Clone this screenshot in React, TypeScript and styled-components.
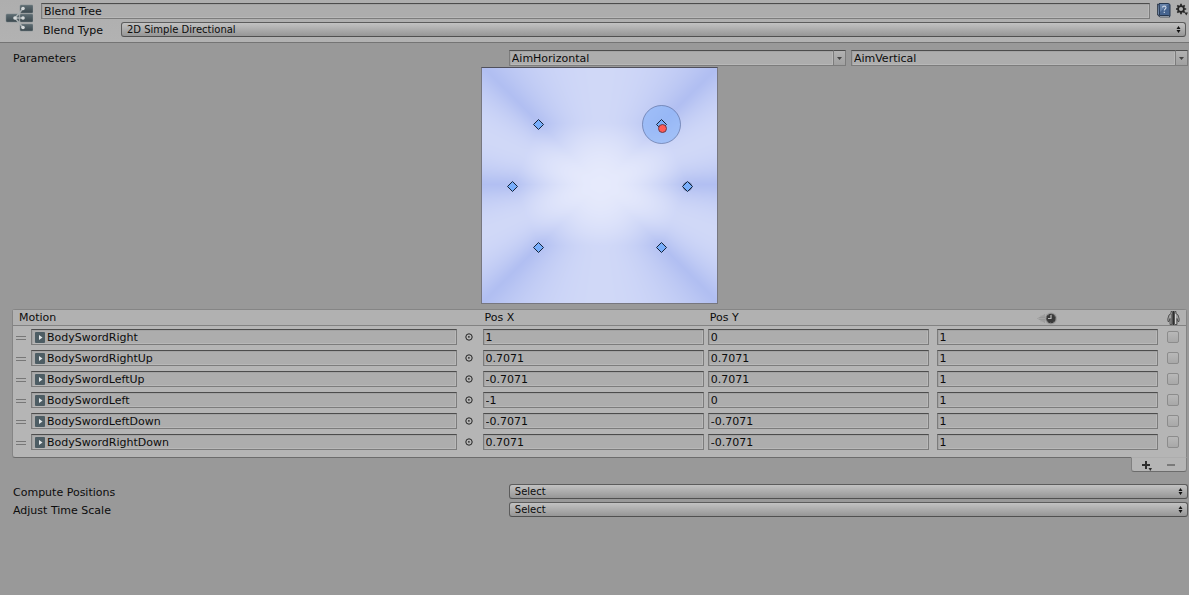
import React, { useEffect, useRef } from "react";
import styled, { createGlobalStyle } from "styled-components";

const GlobalStyle = createGlobalStyle`
  *, *::before, *::after { box-sizing: border-box; }
  body {
    margin: 0;
    min-height: 100vh;
    background: #999;
    color: #0c0c0c;
    font: 11px/15px "DejaVu Sans", Verdana, sans-serif;
  }
  button, input, select { font: inherit; color: inherit; margin: 0; }
`;

/* ---------- shared controls ---------- */

const TextField = styled.input<{ $inset?: number }>`
  display: block;
  flex: 1;
  min-width: 0;
  width: 100%;
  height: 16px;
  padding: 0 0 0 ${(p) => p.$inset ?? 2}px;
  border: 1px solid #7c7c7c;
  border-top-color: #4c4c4c;
  border-radius: 0;
  background: #adadad;
  box-shadow: inset 1px 1px 0 #a3a3a3, inset -1px -1px 0 #b8b8b8;
  outline: none;
`;

const IconButton = styled.button<{ $w: number; $h: number }>`
  display: flex;
  flex: none;
  align-items: center;
  justify-content: center;
  width: ${(p) => p.$w}px;
  height: ${(p) => p.$h}px;
  padding: 0;
  border: 0;
  background: none;
`;

const PopupFrame = styled.div`
  position: relative;
  display: flex;
  flex: 1;
  min-width: 0;
`;

const PopupSelect = styled.select`
  appearance: none;
  width: 100%;
  height: 15px;
  padding: 0 16px 0 5px;
  border: 1px solid #5c5c5c;
  border-bottom-color: #505050;
  border-radius: 3px;
  background: linear-gradient(#c2c2c2, #969696);
  font-size: 10px;
  line-height: 13px;
  outline: none;
`;

const PopupArrows = styled.svg`
  position: absolute;
  top: 4px;
  right: 5px;
  pointer-events: none;
`;

function Popup({ id, label, value }: { id: string; label?: string; value: string }) {
  return (
    <PopupFrame>
      <PopupSelect id={id} aria-label={label} defaultValue={value}>
        <option>{value}</option>
      </PopupSelect>
      <PopupArrows width="5" height="7" viewBox="0 0 5 7" aria-hidden="true">
        <path d="M2.5 0 4.5 3H.5zM2.5 7 4.5 4H.5z" fill="#111" />
      </PopupArrows>
    </PopupFrame>
  );
}

/* ---------- header ---------- */

const Header = styled.header`
  display: flex;
  gap: 8px;
  height: 43px;
  padding: 3px 0 0 5px;
  border-bottom: 1px solid #747474;
  background: linear-gradient(#aeaeae, #b2b2b2);
`;

const HeaderBody = styled.div`
  display: flex;
  flex: 1;
  flex-direction: column;
  gap: 3px;
`;

const TitleRow = styled.div`
  display: flex;
  padding-right: 1px;
`;

const TitleTools = styled.div`
  display: flex;
  gap: 5px;
  padding-left: 7px;
`;

const TypeRow = styled.div`
  display: flex;
  height: 17px;
  padding: 0 3px 0 2px;
`;

const FieldLabel = styled.label`
  line-height: 17px;
`;

const TypeLabel = styled(FieldLabel)`
  width: 78px;
`;

function BlendTreeIcon() {
  return (
    <svg width="28" height="30" viewBox="0 0 28 30" aria-hidden="true">
      <defs>
        <linearGradient id="node" x1="0" y1="0" x2="0" y2="1">
          <stop offset="0" stopColor="#5f6e74" />
          <stop offset="1" stopColor="#3b484e" />
        </linearGradient>
      </defs>
      <g fill="url(#node)" stroke="#7d898d" strokeWidth=".5">
        <rect x="15" y="2" width="13" height="8" rx="1" />
        <rect x="1" y="11" width="13" height="8" rx="1" />
        <rect x="15" y="11" width="13" height="8" rx="1" />
        <rect x="15" y="21" width="13" height="7" rx="1" />
      </g>
      <path d="M10 15 18 5.500M10 15H18M10 15 18 24.500" fill="none" stroke="#a9afb1" strokeWidth="1.500" />
      <g fill="#d6dadb">
        <circle cx="10" cy="15" r="1.800" />
        <circle cx="18" cy="5.500" r="1.800" />
        <circle cx="18" cy="15" r="1.800" />
        <circle cx="18" cy="24.500" r="1.800" />
      </g>
    </svg>
  );
}

function HelpIcon() {
  return (
    <svg width="14" height="15" viewBox="0 0 14 15" aria-hidden="true">
      <path d="M.5 1 3 2.500V14L.5 12z" fill="#7d93b2" stroke="#27313f" strokeWidth=".8" />
      <path d="M1 12 11 12 13 14H3z" fill="#c4cad3" stroke="#27313f" strokeWidth=".7" />
      <path d="M2 .500H11.500L13 1.500V13.300L11.500 12.500H2.500z" fill="#46648f" stroke="#26374f" />
      <path d="M3 1H11.500L3 9z" fill="#7c96ba" opacity=".6" />
      <path d="M5.500 4.500C5.500 2.600 9 2.600 9 4.600 9 6 7.300 6 7.300 7.500M7.300 8.800V10" fill="none" stroke="#c9d4e4" strokeWidth="1.200" />
    </svg>
  );
}

function GearIcon() {
  return (
    <svg width="12" height="14" viewBox="0 0 12 14" aria-hidden="true">
      <circle cx="5" cy="6" r="2.900" fill="none" stroke="#262626" strokeWidth="1.700" />
      <path
        d="M5 .8V3M5 9V11.200M-.2 6H2M8 6H10.200M1.300 2.300 2.900 3.900M7.100 8.100 8.700 9.700M1.300 9.700 2.900 8.100M7.100 3.900 8.700 2.300"
        stroke="#262626"
        strokeWidth="1.700"
      />
      <path d="M8.500 9.500H12L10.300 12.500z" fill="#262626" />
    </svg>
  );
}

/* ---------- parameter rows ---------- */

const Main = styled.main`
  padding: 7px 1px 0 13px;
`;

const PropertyRow = styled.div`
  display: grid;
  grid-template-columns: 73fr 100fr;
  height: 16px;
`;

const RowCaption = styled.span`
  line-height: 17px;
`;

const PropertyFields = styled.div`
  display: flex;
  gap: 5px;
`;

const Combo = styled.div`
  display: flex;
  flex: 1;
  min-width: 0;
`;

const ComboButton = styled.button`
  display: flex;
  align-items: center;
  justify-content: center;
  width: 13px;
  height: 16px;
  margin-left: -1px;
  padding: 0;
  border: 1px solid #7c7c7c;
  border-top-color: #4c4c4c;
  background: linear-gradient(#b2b2b2, #a0a0a0);
`;

function ParameterCombo({ label, value }: { label: string; value: string }) {
  return (
    <Combo>
      <TextField aria-label={label} defaultValue={value} />
      <ComboButton aria-label={`Choose ${label}`}>
        <svg width="5" height="3" viewBox="0 0 5 3" aria-hidden="true">
          <path d="M0 0H5L2.500 3z" fill="#444" />
        </svg>
      </ComboButton>
    </Combo>
  );
}

/* ---------- blend field ---------- */

const FIELD = 235;
const CENTER = { x: 118, y: 116 };

const Field = styled.div`
  position: relative;
  width: 237px;
  height: 237px;
  margin: 1px auto 5px;
  border: 1px solid #77777f;
  border-top-color: #50505c;
`;

const FieldRow = styled.div`
  padding-right: 2px;
`;

const FieldCanvas = styled.canvas`
  display: block;
`;

const FieldOverlay = styled.svg`
  position: absolute;
  top: 0;
  left: 0;
`;

/* Motion positions relative to the centre, ordered by angle. */
const MOTION_POINTS = [
  { x: 87, y: 0 },
  { x: 61, y: 61 },
  { x: -61, y: 61 },
  { x: -87, y: 0 },
  { x: -61, y: -61 },
  { x: 61, y: -61 },
];

const MARKERS = [
  { x: 56.5, y: 56.5 },
  { x: 179.5, y: 56.5 },
  { x: 30.5, y: 118.5 },
  { x: 205.5, y: 118.5 },
  { x: 56.5, y: 179.5 },
  { x: 179.5, y: 179.5 },
];

/* Sum of squared motion weights at a position of the simple directional blend. */
function blendStrength(x: number, y: number): number {
  const count = MOTION_POINTS.length;
  for (let i = 0; i < count; i++) {
    const a = MOTION_POINTS[i];
    const b = MOTION_POINTS[(i + 1) % count];
    const det = a.x * b.y - a.y * b.x;
    let wa = (x * b.y - y * b.x) / det;
    let wb = (a.x * y - a.y * x) / det;
    if (wa < -1e-6 || wb < -1e-6) continue;
    const total = wa + wb;
    if (total > 1) {
      wa /= total;
      wb /= total;
    }
    const rest = Math.max(0, 1 - wa - wb) / count;
    return (wa + rest) ** 2 + (wb + rest) ** 2 + (count - 2) * rest * rest;
  }
  return 1 / count;
}

/* Average over a small neighbourhood, so the edges between sectors stay soft. */
function softStrength(x: number, y: number): number {
  let sum = 0;
  for (let dy = -6; dy <= 6; dy += 3) {
    for (let dx = -6; dx <= 6; dx += 3) {
      sum += blendStrength(x + dx, y + dy);
    }
  }
  return 0.5 * (sum / 25) + 0.5 * blendStrength(x, y);
}

function BlendField() {
  const ref = useRef<HTMLCanvasElement>(null);
  useEffect(() => {
    const ctx = ref.current?.getContext("2d");
    if (!ctx) return;
    const image = ctx.createImageData(FIELD, FIELD);
    for (let py = 0; py < FIELD; py++) {
      for (let px = 0; px < FIELD; px++) {
        const s = softStrength(px - CENTER.x, py - CENTER.y);
        const at = (py * FIELD + px) * 4;
        image.data[at] = 241 - 66 * s;
        image.data[at + 1] = 243 - 54 * s;
        image.data[at + 2] = 254 - 13 * s;
        image.data[at + 3] = 255;
      }
    }
    ctx.putImageData(image, 0, 0);
  }, []);
  return (
    <Field>
      <FieldCanvas ref={ref} width={FIELD} height={FIELD} role="img" aria-label="Blend space" />
      <FieldOverlay width={FIELD} height={FIELD} viewBox={`0 0 ${FIELD} ${FIELD}`} aria-hidden="true">
        <circle cx="179.5" cy="56.5" r="19" fill="#86b2f8" fillOpacity=".6" stroke="#4a5c8c" strokeOpacity=".55" />
        <circle cx="205.5" cy="118.5" r="4.500" fill="#7f90b8" stroke="#4a5c8c" strokeOpacity=".4" />
        {MARKERS.map((m) => (
          <path
            key={`${m.x}-${m.y}`}
            d={`M${m.x} ${m.y - 5}l5 5-5 5-5-5z`}
            fill="#78aefb"
            stroke="#13233c"
          />
        ))}
        <circle cx="180.5" cy="60.500" r="4" fill="#ff5a55" stroke="#6b3a48" />
      </FieldOverlay>
    </Field>
  );
}

/* ---------- motion list ---------- */

const ListPanel = styled.section`
  margin: 0 1px 0 -1px;
  padding-bottom: 5px;
  border: 1px solid #858585;
  border-bottom-color: #6c6c6c;
  border-radius: 3px 3px 0 3px;
  background: #b5b5b5;
`;

const MotionTable = styled.table`
  width: 100%;
  table-layout: fixed;
  border-collapse: separate;
  border-spacing: 0;
`;

const HeadCell = styled.th<{ $width?: string; $indent?: number }>`
  width: ${(p) => p.$width ?? "auto"};
  height: 16px;
  padding: 0 0 0 ${(p) => p.$indent ?? 0}px;
  border-bottom: 1px solid #828282;
  background: #b1b1b1;
  font-weight: 400;
  line-height: 15px;
  text-align: left;
  white-space: nowrap;
`;

const HeadIcon = styled.div<{ $align?: string }>`
  display: flex;
  justify-content: ${(p) => p.$align ?? "center"};
  padding-right: ${(p) => (p.$align ? 0 : 9)}px;
`;

const Cell = styled.td<{ $gap?: number }>`
  padding: 3px ${(p) => p.$gap ?? 0}px 2px 0;
`;

const Handle = styled.div`
  width: 10px;
  height: 4px;
  margin: 1px 0 0 3px;
  border: solid #777;
  border-width: 1px 0;
`;

const MotionCell = styled.div`
  position: relative;
  display: flex;
`;

const ClipIcon = styled.svg`
  position: absolute;
  top: 3px;
  left: 4px;
`;

const MirrorBox = styled.input`
  appearance: none;
  display: block;
  width: 12px;
  height: 12px;
  border: 1px solid #8c8c8c;
  border-radius: 2px;
  background: linear-gradient(#b8b8b8, #a8a8a8);
`;

const ListFooter = styled.div`
  position: relative;
  display: flex;
  justify-content: space-between;
  width: 56px;
  height: 15px;
  margin: -1px 1px 0 auto;
  padding: 0 8px 0 7px;
  border: 1px solid #808080;
  border-top-color: #adadad;
  border-bottom-color: #6c6c6c;
  border-radius: 0 0 3px 3px;
  background: #b5b5b5;
`;

const FooterWrap = styled.div`
  padding-bottom: 12px;
`;

const PopupRow = styled(PropertyRow)`
  height: 18px;
`;

const MOTIONS = [
  { name: "BodySwordRight", x: "1", y: "0" },
  { name: "BodySwordRightUp", x: "0.7071", y: "0.7071" },
  { name: "BodySwordLeftUp", x: "-0.7071", y: "0.7071" },
  { name: "BodySwordLeft", x: "-1", y: "0" },
  { name: "BodySwordLeftDown", x: "-0.7071", y: "-0.7071" },
  { name: "BodySwordRightDown", x: "0.7071", y: "-0.7071" },
];

function MotionRow({ name, x, y }: { name: string; x: string; y: string }) {
  return (
    <tr>
      <Cell>
        <Handle />
      </Cell>
      <Cell>
        <MotionCell>
          <TextField $inset={15} aria-label="Motion" defaultValue={name} />
          <ClipIcon width="10" height="11" viewBox="0 0 10 11" aria-hidden="true">
            <rect width="10" height="11" rx="1" fill="#4d5d64" />
            <path d="M4 3 7.500 5.500 4 8z" fill="#e4e8ea" />
          </ClipIcon>
          <IconButton $w={26} $h={16} aria-label={`Pick motion for ${name}`}>
            <svg width="10" height="9" viewBox="0 0 10 9" aria-hidden="true">
              <circle cx="4" cy="4" r="3.200" fill="none" stroke="#222" />
              <rect x="3.500" y="3.500" width="1" height="1" fill="#111" stroke="#333" strokeWidth=".4" />
            </svg>
          </IconButton>
        </MotionCell>
      </Cell>
      <Cell $gap={4}>
        <TextField aria-label="Pos X" defaultValue={x} />
      </Cell>
      <Cell $gap={8}>
        <TextField aria-label="Pos Y" defaultValue={y} />
      </Cell>
      <Cell $gap={9}>
        <TextField aria-label="Time scale" defaultValue="1" />
      </Cell>
      <Cell>
        <MirrorBox type="checkbox" aria-label={`Mirror ${name}`} />
      </Cell>
    </tr>
  );
}

function SpeedIcon() {
  return (
    <svg width="20" height="15" viewBox="0 0 20 15" aria-hidden="true">
      <path d="M8 4V13L0 8.500z" fill="#979797" />
      <path d="M3 6H8M1 8.500H8M3 11H8" stroke="#a6a6a6" />
      <circle cx="14" cy="8.500" r="6" fill="#9a9a9a" />
      <circle cx="14" cy="8.500" r="4.800" fill="#3a3a3a" />
      <circle cx="14" cy="8.500" r="4.500" fill="none" stroke="#808080" strokeDasharray="1 2.500" />
      <path d="M14 5V8.500H11" fill="none" stroke="#bcbcbc" strokeWidth="1.200" />
    </svg>
  );
}

function MirrorIcon() {
  return (
    <svg width="13" height="15" viewBox="0 0 13 15" aria-hidden="true">
      <path
        d="M5.500 1.500 4 1.500 4 3.500 2 5 .800 9 1 11.500 2 11.500 3 8.500 3 14.500H5.500z"
        fill="#a4a4a4"
        stroke="#4a4a4a"
        strokeWidth=".9"
      />
      <path
        d="M7.500 1.500 9 1.500 9 3.500 11 5 12.200 9 12 11.500 11 11.500 10 8.500 10 14.500H7.500z"
        fill="#a4a4a4"
        stroke="#4a4a4a"
        strokeWidth=".9"
      />
      <path d="M6.500 1V15" stroke="#2e2e2e" />
      <path d="M4.500 4V14" stroke="#707070" />
      <path d="M8.500 4V14" stroke="#d2d2d2" />
    </svg>
  );
}

export default function App() {
  return (
    <>
      <GlobalStyle />
      <Header>
        <BlendTreeIcon />
        <HeaderBody>
          <TitleRow>
            <TextField aria-label="Name" defaultValue="Blend Tree" />
            <TitleTools>
              <IconButton $w={14} $h={15} aria-label="Help">
                <HelpIcon />
              </IconButton>
              <IconButton $w={12} $h={14} aria-label="Settings">
                <GearIcon />
              </IconButton>
            </TitleTools>
          </TitleRow>
          <TypeRow>
            <TypeLabel htmlFor="blend-type">Blend Type</TypeLabel>
            <Popup id="blend-type" value="2D Simple Directional" />
          </TypeRow>
        </HeaderBody>
      </Header>
      <Main>
        <PropertyRow>
          <RowCaption>Parameters</RowCaption>
          <PropertyFields>
            <ParameterCombo label="horizontal parameter" value="AimHorizontal" />
            <ParameterCombo label="vertical parameter" value="AimVertical" />
          </PropertyFields>
        </PropertyRow>
        <FieldRow>
          <BlendField />
        </FieldRow>
        <ListPanel>
          <MotionTable>
            <thead>
              <tr>
                <HeadCell $width="18px" $indent={6}>Motion</HeadCell>
                <HeadCell $width="38.500%" aria-label="Motion clip" />
                <HeadCell $width="19.200%" $indent={2}>Pos X</HeadCell>
                <HeadCell $width="19.500%" $indent={2}>Pos Y</HeadCell>
                <HeadCell aria-label="Time scale">
                  <HeadIcon>
                    <SpeedIcon />
                  </HeadIcon>
                </HeadCell>
                <HeadCell $width="19px" aria-label="Mirror">
                  <HeadIcon $align="flex-start">
                    <MirrorIcon />
                  </HeadIcon>
                </HeadCell>
              </tr>
            </thead>
            <tbody>
              {MOTIONS.map((m) => (
                <MotionRow key={m.name} {...m} />
              ))}
            </tbody>
          </MotionTable>
        </ListPanel>
        <FooterWrap>
          <ListFooter>
            <IconButton $w={14} $h={13} aria-label="Add motion">
              <svg width="13" height="12" viewBox="0 0 13 12" aria-hidden="true">
                <path d="M6 2V10M2 6H10" stroke="#2e2e2e" strokeWidth="2" />
                <path d="M8.500 9H12L10.300 12z" fill="#2e2e2e" />
              </svg>
            </IconButton>
            <IconButton $w={14} $h={13} aria-label="Remove motion">
              <svg width="8" height="12" viewBox="0 0 8 12" aria-hidden="true">
                <path d="M0 6H8" stroke="#7a7a7a" strokeWidth="2" />
              </svg>
            </IconButton>
          </ListFooter>
        </FooterWrap>
        <PopupRow>
          <FieldLabel htmlFor="compute-positions">Compute Positions</FieldLabel>
          <Popup id="compute-positions" value="Select" />
        </PopupRow>
        <PopupRow>
          <FieldLabel htmlFor="time-scale">Adjust Time Scale</FieldLabel>
          <Popup id="time-scale" value="Select" />
        </PopupRow>
      </Main>
    </>
  );
}
